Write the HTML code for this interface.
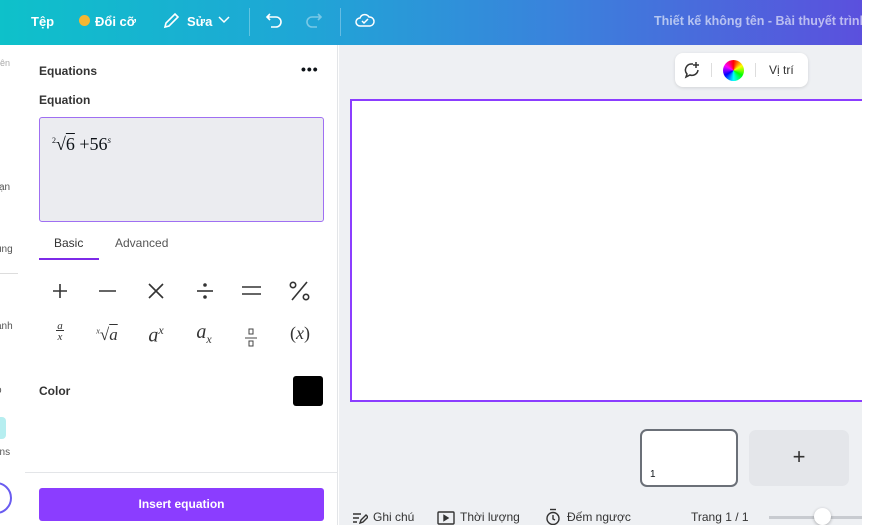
<!DOCTYPE html>
<html><head><meta charset="utf-8"><style>
*{box-sizing:border-box;margin:0;padding:0}
body{width:875px;height:525px;overflow:hidden;background:#fff;font-family:"Liberation Sans",sans-serif;position:relative;color:#0e1318}
.top{position:absolute;left:0;top:0;width:862px;height:45px;background:linear-gradient(90deg,#0ec1ca 0%,#1fa6d6 35%,#3a82dc 65%,#5b50dd 100%);color:#fff;font-weight:bold;font-size:13px;overflow:hidden}
.top span{position:absolute;top:14px;white-space:nowrap}
.sb{position:absolute;left:0;top:45px;width:25px;height:480px;background:#fff;font-size:10px;color:#555;overflow:hidden}
.panel{position:absolute;left:25px;top:45px;width:313px;height:480px;background:#fff;border-right:1px solid #e3e5e8}
.canvas{position:absolute;left:339px;top:45px;width:523px;height:480px;background:#eef0f3;overflow:hidden}
.sym{position:absolute;font-family:"Liberation Serif",serif;font-size:20px;color:#333;text-align:center;width:30px}
.bt{position:absolute;top:465px;font-size:12px;color:#333;white-space:nowrap}
</style></head><body>
<div class="top">
<span style="left:31px">Tệp</span>
<span style="left:79px;top:15px;width:11px;height:11px;border-radius:50%;background:#f5b731"></span>
<span style="left:95px">Đổi cỡ</span>
<svg style="position:absolute;left:162px;top:12px" width="18" height="18" viewBox="0 0 18 18" fill="none" stroke="#fff" stroke-width="1.6"><path d="M3 15l1-4 9-9 3 3-9 9z"/></svg>
<span style="left:187px">Sửa</span>
<svg style="position:absolute;left:218px;top:16px" width="12" height="8" viewBox="0 0 12 8" fill="none" stroke="#fff" stroke-width="1.5"><path d="M1 1l5 5 5-5"/></svg>
<div style="position:absolute;left:249px;top:8px;width:1px;height:28px;background:rgba(255,255,255,.3)"></div>
<svg style="position:absolute;left:265px;top:12px" width="18" height="16" viewBox="0 0 18 16" fill="none" stroke="#fff" stroke-width="1.6"><path d="M5 2L2 5l3 3M2 5h9a5 5 0 010 10H6"/></svg>
<svg style="position:absolute;left:305px;top:12px" width="18" height="16" viewBox="0 0 18 16" fill="none" stroke="rgba(255,255,255,.4)" stroke-width="1.6"><path d="M13 2l3 3-3 3M16 5H7a5 5 0 000 10h5"/></svg>
<div style="position:absolute;left:340px;top:8px;width:1px;height:28px;background:rgba(255,255,255,.3)"></div>
<svg style="position:absolute;left:355px;top:12px" width="20" height="16" viewBox="0 0 20 16" fill="none" stroke="#fff" stroke-width="1.5"><path d="M5 14a4 4 0 010-8 5 5 0 019-1 4 4 0 011 9z M7 9l2 2 4-4"/></svg>
<span style="left:654px;color:rgba(255,255,255,.6);font-size:12.5px">Thiết kế không tên - Bài thuyết trình</span>
</div>
<div class="sb">
<div style="position:absolute;left:0;top:13px;color:#aaa;font-size:9px">ên</div>
<div style="position:absolute;left:-1px;top:137px">ạn</div>
<div style="position:absolute;left:-4px;top:199px">ụng</div>
<div style="position:absolute;left:0;top:228px;width:18px;height:1px;background:#ddd"></div>
<div style="position:absolute;left:-4px;top:276px">anh</div>
<div style="position:absolute;left:-4px;top:340px">o</div>
<div style="position:absolute;left:-6px;top:372px;width:12px;height:22px;border-radius:4px;background:#b6eef0"></div>
<div style="position:absolute;left:-6px;top:402px">ons</div>
<div style="position:absolute;left:-20px;top:437px;width:32px;height:32px;border-radius:50%;border:2px solid #6a5cf0"></div>
</div>
<div class="panel">
<div style="position:absolute;left:14px;top:19px;font-size:12px;font-weight:bold;color:#333">Equations</div>
<div style="position:absolute;left:276px;top:16px;font-size:14px;font-weight:bold;letter-spacing:1px">•••</div>
<div style="position:absolute;left:14px;top:48px;font-size:12px;font-weight:bold;color:#333">Equation</div>
<div style="position:absolute;left:14px;top:72px;width:285px;height:105px;background:#ebecf0;border:1px solid #9f6ff2;border-radius:3px">
<div style="position:absolute;left:12px;top:16px;font-family:'Liberation Serif',serif;font-size:18px"><sup style="font-size:8px">2</sup>√<span style="text-decoration:overline">6</span> +56<sup style="font-size:9px;font-style:italic">s</sup></div>
</div>
<div style="position:absolute;left:29px;top:191px;font-size:12px;color:#333">Basic</div>
<div style="position:absolute;left:14px;top:213px;width:60px;height:2px;background:#7d2ae8"></div>
<div style="position:absolute;left:90px;top:191px;font-size:12px;color:#555">Advanced</div>
<svg style="position:absolute;left:20px;top:234px" width="290" height="24" viewBox="0 0 290 24" fill="none" stroke="#333" stroke-width="1.6">
<path d="M15 5v14M8 12h14"/>
<path d="M54 12h17"/>
<path d="M104 5l14 14M118 5L104 19"/>
<path d="M152 12h16"/><circle cx="160" cy="6" r="1" fill="#333"/><circle cx="160" cy="18" r="1" fill="#333"/>
<path d="M197 8h19M197 15h19"/>
<path d="M247 21L262 3"/><circle cx="248" cy="6" r="2.7"/><circle cx="261" cy="18" r="2.7"/>
</svg>
<div class="sym" style="left:20px;top:276px;font-size:11px;line-height:11px;font-style:italic">a<br><span style="border-top:1px solid #333;padding:0 2px">x</span></div>
<div class="sym" style="left:67px;top:280px;font-size:17px"><sup style="font-size:8px;font-style:italic">x</sup>√<i style="text-decoration:overline">a</i></div>
<div class="sym" style="left:116px;top:278px;font-size:20px;font-style:italic">a<sup style="font-size:12px">x</sup></div>
<div class="sym" style="left:164px;top:276px;font-size:20px;font-style:italic">a<sub style="font-size:12px">x</sub></div>
<svg style="position:absolute;left:218px;top:282px" width="16" height="22" viewBox="0 0 16 22" fill="none" stroke="#444" stroke-width="1"><rect x="6" y="2" width="4" height="5"/><path d="M2 11h12"/><rect x="6" y="14" width="4" height="5"/></svg>
<div class="sym" style="left:260px;top:278px;font-size:18px">(<i>x</i>)</div>
<div style="position:absolute;left:14px;top:339px;font-size:12px;font-weight:bold;color:#333">Color</div>
<div style="position:absolute;left:268px;top:331px;width:30px;height:30px;background:#000;border-radius:3px"></div>
<div style="position:absolute;left:0;top:427px;width:313px;height:1px;background:#e3e5e8"></div>
<div style="position:absolute;left:14px;top:443px;width:285px;height:33px;background:#8b3dff;border-radius:3px;color:#fff;font-size:12px;font-weight:bold;text-align:center;line-height:33px">Insert equation</div>
</div>
<div class="canvas">
<div style="position:absolute;left:336px;top:8px;width:133px;height:34px;background:#fff;border-radius:8px;box-shadow:0 1px 3px rgba(0,0,0,.12)">
<svg style="position:absolute;left:8px;top:8px" width="18" height="18" viewBox="0 0 18 18" fill="none" stroke="#333" stroke-width="1.5"><path d="M10 3H8a6 6 0 00-4 10l-1 3 4-2a6 6 0 008-5M13 1v6M10 4h6"/></svg>
<div style="position:absolute;left:36px;top:10px;width:1px;height:14px;background:#ddd"></div>
<div style="position:absolute;left:48px;top:7px;width:21px;height:21px;border-radius:50%;background:conic-gradient(red,yellow,lime,cyan,blue,magenta,red)"></div>
<div style="position:absolute;left:80px;top:10px;width:1px;height:14px;background:#ddd"></div>
<div style="position:absolute;left:94px;top:10px;font-size:12px;color:#333">Vị trí</div>
</div>
<div style="position:absolute;left:11px;top:54px;width:530px;height:303px;background:#fff;border:2px solid #8b3dff"></div>
<div style="position:absolute;left:301px;top:384px;width:98px;height:58px;background:#fff;border:2px solid #6b7078;border-radius:7px;box-shadow:inset 0 0 0 2px #fff"><span style="position:absolute;left:8px;top:38px;font-size:10px">1</span></div>
<div style="position:absolute;left:410px;top:385px;width:100px;height:56px;background:#e4e6ea;border-radius:7px;text-align:center;line-height:54px;font-size:22px;color:#333">+</div>
<svg style="position:absolute;left:13px;top:466px" width="16" height="14" viewBox="0 0 16 14" fill="none" stroke="#333" stroke-width="1.4"><path d="M1 3h8M1 7h6M1 11h4M8 12l1-3 5-5 2 2-5 5z"/></svg>
<div class="bt" style="left:34px">Ghi chú</div>
<svg style="position:absolute;left:98px;top:466px" width="18" height="14" viewBox="0 0 18 14" fill="none" stroke="#333" stroke-width="1.4"><rect x="1" y="1" width="16" height="12" rx="1"/><path d="M7 4.5l4 2.5-4 2.5z" fill="#333"/></svg>
<div class="bt" style="left:121px">Thời lượng</div>
<svg style="position:absolute;left:206px;top:463px" width="16" height="18" viewBox="0 0 16 18" fill="none" stroke="#333" stroke-width="1.4"><path d="M5 1.5h6"/><circle cx="8" cy="10.5" r="6"/><path d="M8 7v4l2 1"/></svg>
<div class="bt" style="left:228px">Đếm ngược</div>
<div class="bt" style="left:352px">Trang 1 / 1</div>
<div style="position:absolute;left:430px;top:471px;width:93px;height:3px;background:#c8cbd0"></div>
<div style="position:absolute;left:475px;top:463px;width:17px;height:17px;border-radius:50%;background:#fff;box-shadow:0 1px 3px rgba(0,0,0,.3)"></div>
</div>
</body></html>
